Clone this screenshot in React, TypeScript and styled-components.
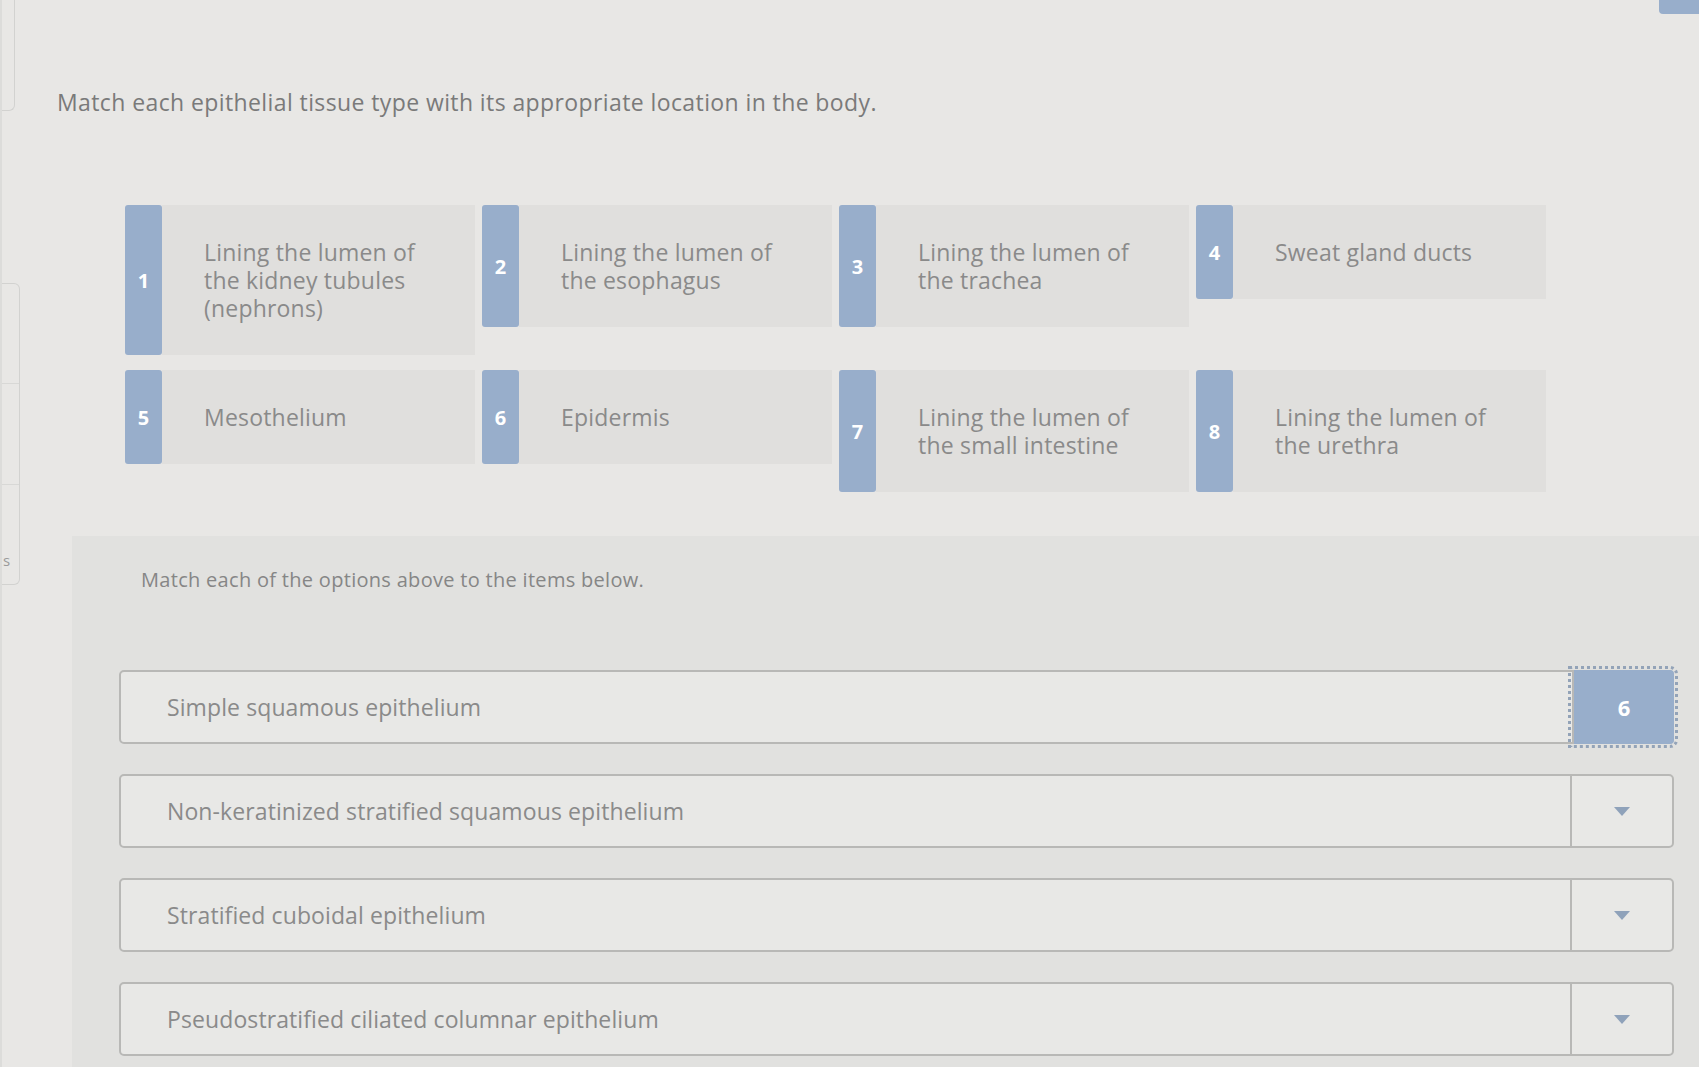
import React from "react";
import styled, { createGlobalStyle } from "styled-components";

const Global = createGlobalStyle`
	html, body {
		margin: 0;
		padding: 0;
		background: #e8e7e5;
	}
	body {
		font-family: "Open Sans", Lato, "Liberation Sans", sans-serif;
		color: #858585;
	}
`;

const Page = styled.div`
	display: flex;
	width: 100%;
	min-height: 1067px;
	overflow: hidden;
`;

const SideRail = styled.div`
	width: 20px;
	flex-shrink: 0;
	display: flex;
	flex-direction: column;
	border-left: 2px solid #dcdcda;
	box-sizing: border-box;
`;

const SideTab = styled.div`
	width: 12px;
	height: 110px;
	border-right: 1px solid #d2d2d0;
	border-bottom: 1px solid #d2d2d0;
	border-bottom-right-radius: 6px;
`;

const SideCard = styled.div`
	margin-top: 172px;
	height: 300px;
	width: 17px;
	border: 1px solid #d2d2d0;
	border-left: none;
	border-radius: 0 6px 6px 0;
	display: flex;
	flex-direction: column;
`;

const SideCell = styled.div<{ $last?: boolean }>`
	flex: 1;
	border-bottom: ${(p) => (p.$last ? "none" : "1px solid #d8d8d6")};
	display: flex;
	align-items: flex-end;
	padding: 0 0 16px 1px;
	font-size: 15px;
	line-height: 16px;
	color: #9a9a9a;
`;

const Main = styled.div`
	flex: 1;
	display: flex;
	flex-direction: column;
	min-width: 0;
`;

const TopBar = styled.div`
	height: 14px;
	display: flex;
	justify-content: flex-end;
`;

const CornerButton = styled.div`
	width: 40px;
	height: 14px;
	background: #98aecb;
	border-bottom-left-radius: 4px;
`;

const Prompt = styled.div`
	margin: 74px 0 0 37px;
	font-size: 23px;
	line-height: 28px;
	color: #7a7a7a;
	letter-spacing: 0.4px;
`;

const TileGrid = styled.div`
	margin: 89px 0 0 105px;
	display: grid;
	grid-template-columns: repeat(4, 350px);
	column-gap: 7px;
	row-gap: 15px;
	align-items: start;
`;

const Tile = styled.div`
	display: flex;
	align-items: stretch;
`;

const Badge = styled.div`
	width: 37px;
	flex-shrink: 0;
	background: #98aecb;
	border-radius: 3px;
	display: flex;
	align-items: center;
	justify-content: center;
	color: #fff;
	font-weight: 700;
	font-size: 20px;
`;

const TileBody = styled.div`
	flex: 1;
	background: #e0dfdd;
	padding: 33px 16px 33px 42px;
	display: flex;
	align-items: center;
`;

const TileText = styled.div`
	max-width: 232px;
	font-size: 23px;
	line-height: 28px;
	color: #8a8a8a;
	letter-spacing: 0.2px;
`;

const MatchPanel = styled.div`
	margin: 44px 0 0 52px;
	background: #e1e1df;
	padding: 32px 25px 9px 47px;
	flex: 1;
`;

const PanelNote = styled.div`
	margin: 0 0 78px 22px;
	font-size: 20px;
	line-height: 24px;
	color: #868686;
	letter-spacing: 0.3px;
`;

const AnswerList = styled.div`
	display: flex;
	flex-direction: column;
	gap: 30px;
`;

const AnswerRow = styled.div`
	height: 74px;
	box-sizing: border-box;
	display: flex;
	border: 2px solid #b8b8b6;
	border-radius: 5px;
	background: #e8e8e6;
`;

const AnswerLabel = styled.div`
	flex: 1;
	display: flex;
	align-items: center;
	padding-left: 46px;
	font-size: 23px;
	color: #8a8a8a;
	letter-spacing: 0.1px;
`;

const AnswerSlot = styled.div<{ $filled?: boolean }>`
	width: 100px;
	margin: ${(p) => (p.$filled ? "-2px -2px -2px 0" : "0")};
	border-left: 2px solid #b8b8b6;
	background: ${(p) => (p.$filled ? "#98aecb" : "transparent")};
	border-radius: 0 4px 4px 0;
	outline: ${(p) => (p.$filled ? "3px dotted #93a3b8" : "none")};
	outline-offset: 1px;
	display: flex;
	align-items: center;
	justify-content: center;
	color: #fff;
	font-weight: 700;
	font-size: 22px;
`;

const options = [
	{ n: 1, text: "Lining the lumen of the kidney tubules (nephrons)" },
	{ n: 2, text: "Lining the lumen of the esophagus" },
	{ n: 3, text: "Lining the lumen of the trachea" },
	{ n: 4, text: "Sweat gland ducts" },
	{ n: 5, text: "Mesothelium" },
	{ n: 6, text: "Epidermis" },
	{ n: 7, text: "Lining the lumen of the small intestine" },
	{ n: 8, text: "Lining the lumen of the urethra" },
];

const answers = [
	{ text: "Simple squamous epithelium", value: "6" },
	{ text: "Non-keratinized stratified squamous epithelium", value: "" },
	{ text: "Stratified cuboidal epithelium", value: "" },
	{ text: "Pseudostratified ciliated columnar epithelium", value: "" },
];

function Caret() {
	return (
		<svg width="16" height="9" viewBox="0 0 16 9">
			<polygon points="0,0 16,0 8,9" fill="#8fa2ba" />
		</svg>
	);
}

export default function App() {
	return (
		<>
			<Global />
			<Page>
				<SideRail>
					<SideTab />
					<SideCard>
						<SideCell />
						<SideCell />
						<SideCell $last>s</SideCell>
					</SideCard>
				</SideRail>
				<Main>
					<TopBar>
						<CornerButton />
					</TopBar>
					<Prompt>
						Match each epithelial tissue type with its appropriate location in
						the body.
					</Prompt>
					<TileGrid>
						{options.map((o) => (
							<Tile key={o.n}>
								<Badge>{o.n}</Badge>
								<TileBody>
									<TileText>{o.text}</TileText>
								</TileBody>
							</Tile>
						))}
					</TileGrid>
					<MatchPanel>
						<PanelNote>Match each of the options above to the items below.</PanelNote>
						<AnswerList>
							{answers.map((a) => (
								<AnswerRow key={a.text}>
									<AnswerLabel>{a.text}</AnswerLabel>
									<AnswerSlot $filled={!!a.value}>
										{a.value ? a.value : <Caret />}
									</AnswerSlot>
								</AnswerRow>
							))}
						</AnswerList>
					</MatchPanel>
				</Main>
			</Page>
		</>
	);
}
